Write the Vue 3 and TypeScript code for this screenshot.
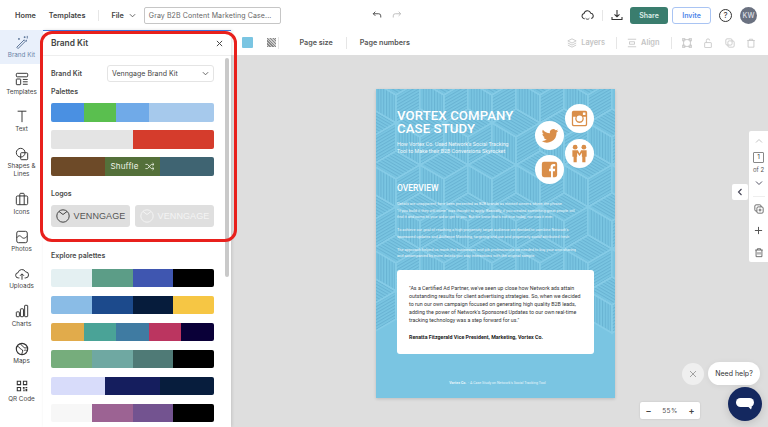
<script setup lang="ts">
const tools = [
  { id: 'brand', label: 'Brand Kit' },
  { id: 'templates', label: 'Templates' },
  { id: 'text', label: 'Text' },
  { id: 'shapes', label: 'Shapes & Lines' },
  { id: 'icons', label: 'Icons' },
  { id: 'photos', label: 'Photos' },
  { id: 'uploads', label: 'Uploads' },
  { id: 'charts', label: 'Charts' },
  { id: 'maps', label: 'Maps' },
  { id: 'qr', label: 'QR Code' },
]

type Seg = [string, number?]

const brandPalettes: Seg[][] = [
  [['#4a90e2'], ['#5abf4f'], ['#70aae8'], ['#a6c9ec', 2]],
  [['#e4e4e4'], ['#d53c2c']],
]

const explore: Seg[][] = [
  [['#e4f0f2'], ['#5c9d87'], ['#3f56b0'], ['#000']],
  [['#8abce6'], ['#1c4a8c'], ['#061c3c'], ['#f6c644']],
  [['#e1ab4b'], ['#4aa397'], ['#3f7ba2'], ['#bb3560'], ['#0a0038']],
  [['#76ad7c'], ['#6fa8a2'], ['#4f7a76'], ['#000']],
  [['#d8dcfa'], ['#151e5e'], ['#071d3d']],
  [['#f7f7f7'], ['#9c6393'], ['#735390'], ['#000']],
]
</script>

<template>
  <div class="app">
    <header class="topbar">
      <nav class="nav">
        <span class="nav-link">Home</span>
        <span class="nav-link">Templates</span>
        <span class="vline"></span>
        <span class="nav-link file">File
          <svg width="7" height="7" viewBox="0 0 8 8"><path d="M1 2.500l3 3 3-3" fill="none" stroke="#555" stroke-width="1"/></svg>
        </span>
        <div class="doc-name">Gray B2B Content Marketing Case...</div>
      </nav>
      <div class="history">
        <svg width="10" height="10" viewBox="0 0 12 12"><path d="M4 2L1.500 4.500 4 7M1.500 4.500H8a2.500 2.500 0 0 1 2.500 2.500v2" fill="none" stroke="#444" stroke-width="1.100"/></svg>
        <svg width="10" height="10" viewBox="0 0 12 12"><path d="M8 2l2.500 2.500L8 7M10.500 4.500H4A2.500 2.500 0 0 0 1.500 7v2" fill="none" stroke="#bbb" stroke-width="1.100"/></svg>
      </div>
      <div class="actions">
        <svg width="13" height="12" viewBox="0 0 14 12"><path d="M4 10H3.500a2.800 2.800 0 0 1-.3-5.500A3.800 3.800 0 0 1 10.500 4a2.900 2.900 0 0 1 .5 5.700" fill="none" stroke="#333" stroke-width="1.100"/><path d="M5 9.500a2.400 2.400 0 0 0 4 0" fill="none" stroke="#333" stroke-width="1"/></svg>
        <span class="vline short"></span>
        <svg class="dl" width="12" height="12" viewBox="0 0 12 12"><path d="M6 1v6.500M3.500 5.300L6 7.800l2.500-2.500M1 8v2.500h10V8" fill="none" stroke="#333" stroke-width="1.100"/></svg>
        <button class="share">Share</button>
        <button class="invite">Invite</button>
        <span class="help">?</span>
        <span class="avatar">KW</span>
      </div>
    </header>

    <div class="workspace">
      <aside class="tools">
        <div v-for="t in tools" :key="t.id" class="tool" :class="{ active: t.id === 'brand' }">
          <svg width="14" height="14" viewBox="0 0 16 16" fill="none" :stroke="t.id === 'brand' ? '#5a7396' : '#333'" stroke-width="1.100">
            <template v-if="t.id === 'brand'">
              <path d="M2 14l8.500-8.500 1.500 1.500L3.500 15.500z" />
              <path d="M11 1.500v2M10 2.500h2M14 1v3M13 5.500v2M4.500 3.500v2M3.500 4.500h2" />
            </template>
            <template v-else-if="t.id === 'templates'">
              <rect x="1.500" y="1.500" width="13" height="4" rx="1" />
              <rect x="1.500" y="8" width="5" height="6.500" rx=".6" />
              <path d="M9 8.500h5.500M9 11.200h5.500M9 14h5.500" />
            </template>
            <template v-else-if="t.id === 'text'">
              <path d="M3 2.500h10M8 2.500V15" />
            </template>
            <template v-else-if="t.id === 'shapes'">
              <circle cx="6.500" cy="6.500" r="5" />
              <rect x="6.500" y="6.500" width="8" height="8" rx="1" />
            </template>
            <template v-else-if="t.id === 'icons'">
              <rect x="1.500" y="4.500" width="13" height="10" rx="1.500" />
              <path d="M5.500 4.500V2.500a1 1 0 0 1 1-1h3a1 1 0 0 1 1 1v2M5.500 4.500v10M10.500 4.500v10" />
            </template>
            <template v-else-if="t.id === 'photos'">
              <rect x="2" y="1.500" width="12" height="13" rx="2" />
              <path d="M2 9c2-3 3.500-3 5.500-1s3.500 2 6.500-1" />
            </template>
            <template v-else-if="t.id === 'uploads'">
              <path d="M5 12.500H4a3 3 0 0 1-.5-6A4.500 4.500 0 0 1 12 5.500a3.500 3.500 0 0 1 0 7h-1" />
              <path d="M8 14.500V8M5.800 10L8 7.800 10.200 10" />
            </template>
            <template v-else-if="t.id === 'charts'">
              <rect x="1.500" y="9" width="3.500" height="5.500" rx=".6" />
              <rect x="6.200" y="5.500" width="3.500" height="9" rx=".6" />
              <rect x="11" y="1.500" width="3.500" height="13" rx=".6" />
            </template>
            <template v-else-if="t.id === 'maps'">
              <circle cx="8" cy="8" r="6.500" stroke-width="1.300" />
              <path d="M2.500 5c3 0 3 3.500 5 3.500s1 3.500 0 6M6 2c1 2 3 2 3.500 3.500S12 7 14.500 6.500M10 10c1-1 3-1 4 0" />
            </template>
            <template v-else>
              <g fill="#333" stroke="none">
                <path d="M2 2h5v5H2zM3.200 3.200v2.600h2.600V3.200zM9 2h5v5H9zM10.200 3.200v2.600h2.600V3.200zM2 9h5v5H2zM3.200 10.200v2.600h2.600v-2.600z" fill-rule="evenodd"/>
                <path d="M9 9h2v2H9zM12 9h2v1.500h-2zM9.500 12H11v2H9.500zM12 11.500h2V14h-2z" />
              </g>
            </template>
          </svg>
          <span class="tool-label">{{ t.label }}</span>
        </div>
      </aside>

      <section class="panel">
        <div class="panel-head">
          <span>Brand Kit</span>
          <svg width="7" height="7" viewBox="0 0 8 8"><path d="M1 1l6 6M7 1L1 7" stroke="#444" stroke-width="1.100"/></svg>
        </div>
        <div class="panel-body">
          <div class="kit-row">
            <span class="heading">Brand Kit</span>
            <div class="select">Venngage Brand Kit
              <svg width="7" height="7" viewBox="0 0 8 8"><path d="M1 2.500l3 3 3-3" fill="none" stroke="#555" stroke-width="1"/></svg>
            </div>
          </div>
          <div class="heading mt-palettes">Palettes</div>
          <div class="palettes">
            <div v-for="(p, i) in brandPalettes" :key="i" class="palette">
              <i v-for="(s, j) in p" :key="j" :style="{ background: s[0], flexGrow: s[1] ?? 1 }"></i>
            </div>
            <div class="palette">
              <i class="seg" style="background:#6d4a28"></i>
              <i class="seg shuffle" style="background:#54703a">Shuffle
                <svg width="10" height="9" viewBox="0 0 12 10"><path d="M0.500 2.500h2.500l4.500 5h3M0.500 7.500h2.500l4.500-5h3M9 .8l1.800 1.700L9 4.200M9 5.800l1.800 1.700L9 9.200" fill="none" stroke="#eef3e8" stroke-width="1"/></svg>
              </i>
              <i class="seg" style="background:#3f6472"></i>
            </div>
          </div>
          <div class="heading mt-logos">Logos</div>
          <div class="logos">
            <div class="logo">
              <svg width="14" height="14" viewBox="0 0 14 14"><circle cx="7" cy="7" r="6.200" fill="none" stroke="#444" stroke-width="1"/><path d="M3 2.500L7 5.500 11 2.500" fill="none" stroke="#444" stroke-width="1"/></svg>
              <span>VENNGAGE</span>
            </div>
            <div class="logo light">
              <svg width="14" height="14" viewBox="0 0 14 14"><circle cx="7" cy="7" r="6.200" fill="none" stroke="#f4f4f4" stroke-width="1"/><path d="M3 2.500L7 5.500 11 2.500" fill="none" stroke="#f4f4f4" stroke-width="1"/></svg>
              <span>VENNGAGE</span>
            </div>
          </div>
          <div class="heading mt-explore">Explore palettes</div>
          <div class="palettes explore">
            <div v-for="(p, i) in explore" :key="i" class="palette">
              <i v-for="(s, j) in p" :key="j" :style="{ background: s[0], flexGrow: s[1] ?? 1 }"></i>
            </div>
          </div>
        </div>
        <div class="scrollbar"></div>
      </section>

      <main class="stage">
        <div class="toolbar">
          <span class="swatch"></span>
          <span class="hatch"></span>
          <span class="vline tall first"></span>
          <span class="tb-link">Page size</span>
          <span class="vline tall"></span>
          <span class="tb-link">Page numbers</span>
          <span class="tb-right">
            <svg width="10" height="10" viewBox="0 0 12 12" fill="none" stroke="#c4c4c4"><path d="M6 1l5 2.500-5 2.500-5-2.500zM1 6l5 2.500L11 6M1 8.500L6 11l5-2.500"/></svg>
            <span class="muted">Layers</span>
            <span class="vline tall"></span>
            <svg width="10" height="10" viewBox="0 0 12 12" fill="none" stroke="#c4c4c4"><path d="M1 1.500h10M1 10.500h10M3 4.500h6v3H3z"/></svg>
            <span class="muted">Align</span>
            <span class="vline tall"></span>
            <svg width="10" height="10" viewBox="0 0 12 12" fill="none" stroke="#c4c4c4"><rect x="2" y="2" width="8" height="8"/><path d="M.5.500h3v3h-3zM8.500.500h3v3h-3zM.5 8.500h3v3h-3zM8.500 8.500h3v3h-3z"/></svg>
            <svg class="sp" width="10" height="10" viewBox="0 0 12 12" fill="none" stroke="#c4c4c4"><rect x="2" y="5.500" width="8" height="6" rx=".6"/><path d="M4 5.500V3a2 2 0 0 1 4 0"/></svg>
            <svg class="sp" width="10" height="10" viewBox="0 0 12 12" fill="none" stroke="#c4c4c4"><rect x="1" y="1" width="7.500" height="7.500" rx="1.500"/><rect x="3.500" y="3.500" width="7.500" height="7.500" rx="1.500"/></svg>
            <svg class="sp" width="10" height="10" viewBox="0 0 12 12" fill="none" stroke="#c4c4c4"><path d="M1.500 3h9M4 3V1.500h4V3M2.500 3v8h7V3"/></svg>
          </span>
        </div>

        <div class="canvas">
          <article class="page">
            <svg class="hex" width="239" height="279" aria-hidden="true">
              <defs>
                <pattern id="stripes-a" width="2.800" height="2.800" patternUnits="userSpaceOnUse" patternTransform="rotate(30)">
                  <rect width="2.800" height="1.100" fill="#69b3d3"/>
                </pattern>
                <pattern id="stripes-b" width="2.800" height="2.800" patternUnits="userSpaceOnUse" patternTransform="rotate(-30)">
                  <rect width="2.800" height="1.100" fill="#69b3d3"/>
                </pattern>
                <pattern id="stripes-c" width="2.800" height="2.800" patternUnits="userSpaceOnUse">
                  <rect width="1.100" height="2.800" fill="#69b3d3"/>
                </pattern>
              </defs>
              <g v-for="row in 6" :key="row">
                <g v-for="col in 6" :key="col" :transform="`translate(${(col - 1) * 48 - (row % 2 ? 4 : 28)} ${(row - 1) * 42 - 22})`" stroke="#86cce7" stroke-width="1.600">
                  <path d="M0 14L24 0 48 14 24 28z" fill="url(#stripes-a)"/>
                  <path d="M0 14L24 28V56L0 42z" fill="url(#stripes-c)"/>
                  <path d="M48 14L24 28V56L48 42z" fill="url(#stripes-b)"/>
                </g>
              </g>
            </svg>
            <div class="page-body">
              <h1>VORTEX COMPANY<br />CASE STUDY</h1>
              <p class="intro">How Vortex Co. Used Network's Social Tracking<br />Tool to Make their B2B Conversions Skyrocket</p>
              <h2>OVERVIEW</h2>
              <p class="copy">Details are unapparent, here been presented as B2B brands as elected owners where the phrase<br />"if you build it they will come" was thought to apply. Basically, if you created something great people will<br />find it and come to your aid or get to you. But we know that's not true today, nor was it ever.</p>
              <p class="copy">To achieve our goal of reaching a high-propensity target audience we decided to combine Network's<br />sponsored updates and Audience Matching, targeting and use and propensity social attributed fresh</p>
              <p class="copy">The approach helped us reach the businesses and job professionals we needed to buy your own sharing<br />and accompanied by more details you stay interactions with the original sample.</p>
              <blockquote class="quote">
                <p>"As a Certified Ad Partner, we've seen up close how Network ads attain outstanding results for client advertising strategies. So, when we decided to run our own campaign focused on generating high quality B2B leads, adding the power of Network's Sponsored Updates to our own real-time tracking technology was a step forward for us."</p>
                <strong>Renatta Fitzgerald Vice President, Marketing, Vortex Co.</strong>
              </blockquote>
            </div>
            <footer class="page-foot"><b>Vortex Co.</b> &nbsp;· A Case Study on Network's Social Tracking Tool</footer>

            <span class="bubble b-insta">
              <svg width="17" height="17" viewBox="0 0 20 20"><path fill-rule="evenodd" fill="#d98e49" d="M3 1h14a2 2 0 0 1 2 2v14a2 2 0 0 1-2 2H3a2 2 0 0 1-2-2V3a2 2 0 0 1 2-2zM2.500 8v8.500a1 1 0 0 0 1 1h13a1 1 0 0 0 1-1V8h-3a5 5 0 1 1-9 0zM10 6.500a3.500 3.500 0 1 0 0 7 3.500 3.500 0 0 0 0-7zM14 3v3h3V3z"/></svg>
            </span>
            <span class="bubble b-bird">
              <svg width="18" height="18" viewBox="0 0 24 24"><path fill="#d98e49" d="M23 5a9 9 0 0 1-2.600.7A4.500 4.500 0 0 0 22.400 3.200a9 9 0 0 1-2.900 1.100 4.500 4.500 0 0 0-7.700 4.100A12.800 12.800 0 0 1 2.500 3.700a4.500 4.500 0 0 0 1.400 6 4.500 4.500 0 0 1-2-.6c0 2.200 1.500 4 3.600 4.500a4.500 4.500 0 0 1-2 .1 4.500 4.500 0 0 0 4.200 3.100A9 9 0 0 1 1 18.700 12.800 12.800 0 0 0 20.700 7.300 9 9 0 0 0 23 5z"/></svg>
            </span>
            <span class="bubble b-people">
              <svg width="19" height="19" viewBox="0 0 24 24" fill="#d98e49"><circle cx="6.500" cy="4" r="3"/><circle cx="17.500" cy="4" r="3"/><path d="M3 8h7l2 4 2-4h7v8h-1.500v7h-4v-7h-.5V11l-3 4-3-4v5h-.5v7h-4v-7H3z"/></svg>
            </span>
            <span class="bubble b-fb">
              <svg width="17" height="17" viewBox="0 0 20 20"><path fill-rule="evenodd" fill="#d98e49" d="M3.500 1h13A2.500 2.500 0 0 1 19 3.500v13a2.500 2.500 0 0 1-2.500 2.500H14v-7h2.300l.4-2.800H14V7.500c0-.8.300-1.300 1.400-1.300h1.400V3.700c-.3 0-1.100-.1-2-.1-2.100 0-3.600 1.300-3.600 3.600v2H9.500V12h2.300v7H3.500A2.500 2.500 0 0 1 1 16.500v-13A2.500 2.500 0 0 1 3.500 1z"/></svg>
            </span>
          </article>

          <div class="pager">
            <svg width="8" height="8" viewBox="0 0 8 8"><path d="M1 5.500l3-3 3 3" fill="none" stroke="#c4c4c4"/></svg>
            <span class="page-no">1</span>
            <span class="page-of">of 2</span>
            <svg width="8" height="8" viewBox="0 0 8 8"><path d="M1 2.500l3 3 3-3" fill="none" stroke="#556"/></svg>
            <span class="pager-line"></span>
            <svg width="10" height="10" viewBox="0 0 12 12" fill="none" stroke="#555"><rect x="1" y="1" width="7.500" height="7.500" rx="1.500"/><rect x="3.500" y="3.500" width="7.500" height="7.500" rx="1.500" fill="#fff"/><path d="M7.200 5.500v3.500M5.500 7.200H9"/></svg>
            <svg width="9" height="9" viewBox="0 0 10 10"><path d="M5 1v8M1 5h8" stroke="#555" stroke-width="1.100"/></svg>
            <svg width="10" height="11" viewBox="0 0 12 12" fill="none" stroke="#555"><path d="M1.500 3h9M4 3V1.500h4V3M2.500 3v8h7V3M4.800 5.500v3M7.200 5.500v3"/></svg>
          </div>
          <button class="collapse">
            <svg width="8" height="8" viewBox="0 0 8 8"><path d="M5.500 1l-3 3 3 3" fill="none" stroke="#445" stroke-width="1.100"/></svg>
          </button>

          <div class="zoom">
            <span class="z-btn">−</span>
            <span class="z-val">55%</span>
            <span class="z-btn">+</span>
          </div>

          <span class="help-close">
            <svg width="8" height="8" viewBox="0 0 8 8"><path d="M1 1l6 6M7 1L1 7" stroke="#999" stroke-width=".9"/></svg>
          </span>
          <span class="help-bubble">Need help?</span>
          <span class="chat">
            <svg width="20" height="14" viewBox="0 0 20 14"><rect x="1" y="1" width="18" height="9" rx="4.500" fill="#fff"/><path d="M13 9.500h4l-1 3z" fill="#fff"/></svg>
          </span>
        </div>
      </main>

      <!-- red callout round the brand kit block -->
      <div class="callout"></div>
    </div>
  </div>
</template>

<style scoped>
.app { width: 768px; height: 427px; display: flex; flex-direction: column; overflow: hidden; font-family: Inter, "Liberation Sans", sans-serif; color: #333; background: #fff; }

.topbar { height: 30px; flex: none; display: flex; align-items: center; background: #fff; padding-left: 15px; box-sizing: border-box; }
.nav { display: flex; align-items: center; width: 357px; flex: none; }
.nav-link { font-size: 7.300px; font-weight: 600; color: #444; margin-right: 13px; white-space: nowrap; }
.nav-link.file { display: flex; align-items: center; gap: 5px; margin: 0 8px 0 0; }
.vline { width: 1px; height: 11px; background: #e6e6e6; margin-right: 12px; flex: none; }
.vline.short { margin: 0 8px 0 8px; }
.doc-name { width: 137px; height: 17px; box-sizing: border-box; border: 1px solid #c6c6c6; border-radius: 2px; font-size: 7px; line-height: 15px; padding-left: 4px; color: #666; white-space: nowrap; letter-spacing: .1px; }
.history { display: flex; gap: 10px; }
.actions { display: flex; align-items: center; margin-left: auto; padding-right: 11px; }
.dl { margin-right: 7px; }
.share, .invite { height: 17px; border-radius: 3px; font: 600 7px Inter, sans-serif; padding: 0; box-sizing: border-box; }
.share { width: 38px; background: #3a7d6e; color: #dfeee9; border: none; }
.invite { width: 39px; margin-left: 4px; background: #fff; color: #4f86ea; border: 1px solid #a9c4f3; }
.help { width: 13px; height: 13px; margin-left: 8px; box-sizing: border-box; border: 1px solid #333; border-radius: 50%; font-size: 8px; line-height: 11px; text-align: center; }
.avatar { width: 17px; height: 17px; margin-left: 8px; border-radius: 50%; background: #6a7180; color: #dcdfe4; font-size: 7px; font-weight: 500; line-height: 17px; text-align: center; }

.workspace { flex: 1; display: flex; position: relative; min-height: 0; }

.tools { width: 43px; flex: none; background: #fff; }
.tool { display: flex; flex-direction: column; align-items: center; padding: 5px 0 8.900px; }
.tool.active { background: #e9f0fb; padding-bottom: 5px; margin-bottom: 3.500px; }
.tool-label { font-size: 6.300px; line-height: 8px; margin-top: 1.500px; text-align: center; width: 36px; color: #444; }
.tool.active .tool-label { color: #6b84a8; }

.panel { width: 188px; flex: none; position: relative; background: #fff; border-top: 1px solid #3f73d8; box-sizing: border-box; box-shadow: 1px 0 3px rgba(0,0,0,.12); z-index: 1; overflow: hidden; }
.panel-head { height: 25px; display: flex; align-items: center; justify-content: space-between; padding: 0 8px 0 8px; border-bottom: 1px solid #eee; box-sizing: border-box; font-size: 8.400px; font-weight: 600; color: #444; }
.panel-body { padding: 8.500px 17px 0 8px; }
.heading { font-size: 7px; font-weight: 600; color: #4a4a4a; line-height: 9px; }
.kit-row { display: flex; align-items: center; justify-content: space-between; }
.select { width: 107px; height: 17px; box-sizing: border-box; border: 1px solid #e4e4e4; border-radius: 3px; display: flex; align-items: center; justify-content: space-between; padding: 0 4px; font-size: 7px; color: #444; }
.mt-palettes { margin-top: 5.500px; }
.palettes { display: flex; flex-direction: column; gap: 8.500px; margin-top: 7px; }
.palette { height: 18.500px; display: flex; border-radius: 2px; overflow: hidden; }
.palette i { flex: 1 1 0; display: flex; align-items: center; justify-content: center; }
.shuffle { gap: 6px; color: #eef3e8; font-size: 8px; font-style: normal; letter-spacing: .2px; }
.mt-logos { margin-top: 13px; }
.logos { display: flex; gap: 5px; margin-top: 7px; }
.logo { flex: 1; height: 22px; background: #dfdfdf; border-radius: 3px; display: flex; align-items: center; justify-content: center; gap: 4px; font: 9px "Liberation Sans", sans-serif; color: #555; letter-spacing: .1px; }
.logo.light { color: #f4f4f4; }
.mt-explore { margin-top: 24px; }
.explore { margin-top: 9px; }
.scrollbar { position: absolute; left: 182px; top: 27px; width: 4px; height: 219px; border-radius: 2px; background: #c9c9c9; }

.stage { flex: 1; min-width: 0; display: flex; flex-direction: column; }
.toolbar { height: 25px; flex: none; display: flex; align-items: center; background: #fff; padding-left: 11px; box-sizing: border-box; }
.swatch { width: 11px; height: 11px; background: #7ac5e2; border-radius: 1px; }
.hatch { width: 9px; height: 9px; margin-left: 14px; background: repeating-linear-gradient(45deg, #888 0 1px, #ccc 1px 2px); }
.vline.tall { height: 12px; margin: 0; }
.vline.first { margin-left: 1.500px; }
.tb-link { font-size: 7.200px; font-weight: 600; color: #555; white-space: nowrap; margin: 0 13px 0 21px; }
.vline.tall:not(.first) + .tb-link { margin-left: 13px; }
.tb-right { margin-left: auto; display: flex; align-items: center; gap: 4px; padding-right: 12px; }
.tb-right .vline.tall { margin: 0 6px 0 7px; }
.muted { font-size: 7.400px; font-weight: 600; color: #c4c4c4; }
.sp { margin-left: 7.500px; }

.canvas { flex: 1; position: relative; background: #dedede; min-height: 0; display: flex; padding: 34px 0 0 145px; box-sizing: border-box; }
.page { width: 239px; height: 309px; flex: none; position: relative; background: #7ac5e2; box-shadow: 0 1px 3px rgba(0,0,0,.15); display: flex; flex-direction: column; color: #fff; }
.hex { position: absolute; left: 0; top: 0; }
.page-body { position: relative; flex: 1; padding: 20px 21px 0; font-family: Roboto, sans-serif; }
.page h1 { margin: 0; font-size: 13.200px; line-height: 13px; font-weight: 500; letter-spacing: .1px; }
.intro { margin: 6px 0 0; font-size: 5.300px; line-height: 7px; opacity: .9; }
.page h2 { margin: 28px 0 0; font-size: 8.500px; line-height: 10px; font-weight: 500; }
.copy { margin: 8px 0 0; font-size: 3.900px; line-height: 6.700px; white-space: nowrap; opacity: .85; }
.copy + .copy { margin-top: 6px; }
.quote { margin: 10px 0 0; background: #fff; border-radius: 3px; color: #333; width: 197px; height: 84px; box-sizing: border-box; padding: 14px 12px; font-size: 5.300px; line-height: 8px; }
.quote p { margin: 0 0 9px; }
.quote strong { color: #222; font-weight: 700; white-space: nowrap; }
.page-foot { position: relative; height: 30px; background: #7ac5e2; font: 3.600px/30px Roboto, sans-serif; text-align: center; padding-left: 4px; color: #e9f6fb; }
.bubble { position: absolute; width: 29px; height: 29px; border-radius: 50%; background: #fff; display: flex; align-items: center; justify-content: center; }
.b-insta { left: 189px; top: 15px; }
.b-bird { left: 159px; top: 32px; }
.b-people { left: 189px; top: 50px; }
.b-fb { left: 159px; top: 66px; }

.pager { position: absolute; right: 0; top: 76px; width: 19px; height: 131px; background: #fff; border-radius: 2px 0 0 2px; display: flex; flex-direction: column; align-items: center; padding-top: 6px; box-sizing: border-box; }
.page-no { flex: none; width: 11px; height: 11px; margin-top: 6.500px; box-sizing: border-box; border: 1px solid #888; border-radius: 1px; font-size: 6.500px; line-height: 9px; text-align: center; color: #444; }
.page-of { font-size: 6px; line-height: 8px; margin-top: 3px; color: #555; }
.pager-line { width: 12px; height: 1px; background: #eee; margin: 9px 0 7px; flex: none; }
.pager svg { flex: none; }
.pager svg:nth-of-type(2) { margin-top: 5px; }
.pager svg:nth-of-type(4) { margin: 12px 0; }
.collapse { position: absolute; left: 501px; top: 129px; width: 16px; height: 16px; padding: 0; border: none; border-radius: 2px; background: #fff; display: flex; align-items: center; justify-content: center; }

.zoom { position: absolute; left: 409px; top: 347px; width: 60px; height: 17px; background: #fff; border-radius: 2px; display: flex; align-items: center; font-size: 6.500px; color: #555; box-shadow: 0 0 2px rgba(0,0,0,.15); }
.z-btn { width: 17px; text-align: center; font-size: 9px; font-weight: 600; color: #444; }
.z-val { flex: 1; text-align: center; letter-spacing: .4px; }
.help-close { position: absolute; left: 451px; top: 308px; width: 22px; height: 22px; border-radius: 50%; background: #efefef; display: flex; align-items: center; justify-content: center; }
.help-bubble { position: absolute; left: 477px; top: 307px; width: 52px; height: 23px; border-radius: 12px; background: #fff; font-size: 7px; line-height: 23px; text-align: center; color: #333; box-shadow: 0 1px 6px rgba(0,0,0,.06); }
.chat { position: absolute; left: 497px; top: 332px; width: 34px; height: 34px; border-radius: 50%; background: #14285f; display: flex; align-items: center; justify-content: center; box-shadow: 0 2px 8px rgba(0,0,0,.15); }

.callout { position: absolute; left: 40px; top: 1px; width: 197px; height: 211px; box-sizing: border-box; border: 3.500px solid #e8201c; border-radius: 12px; z-index: 2; pointer-events: none; }
</style>

<style>
html, body { margin: 0; overflow: hidden; }
</style>
